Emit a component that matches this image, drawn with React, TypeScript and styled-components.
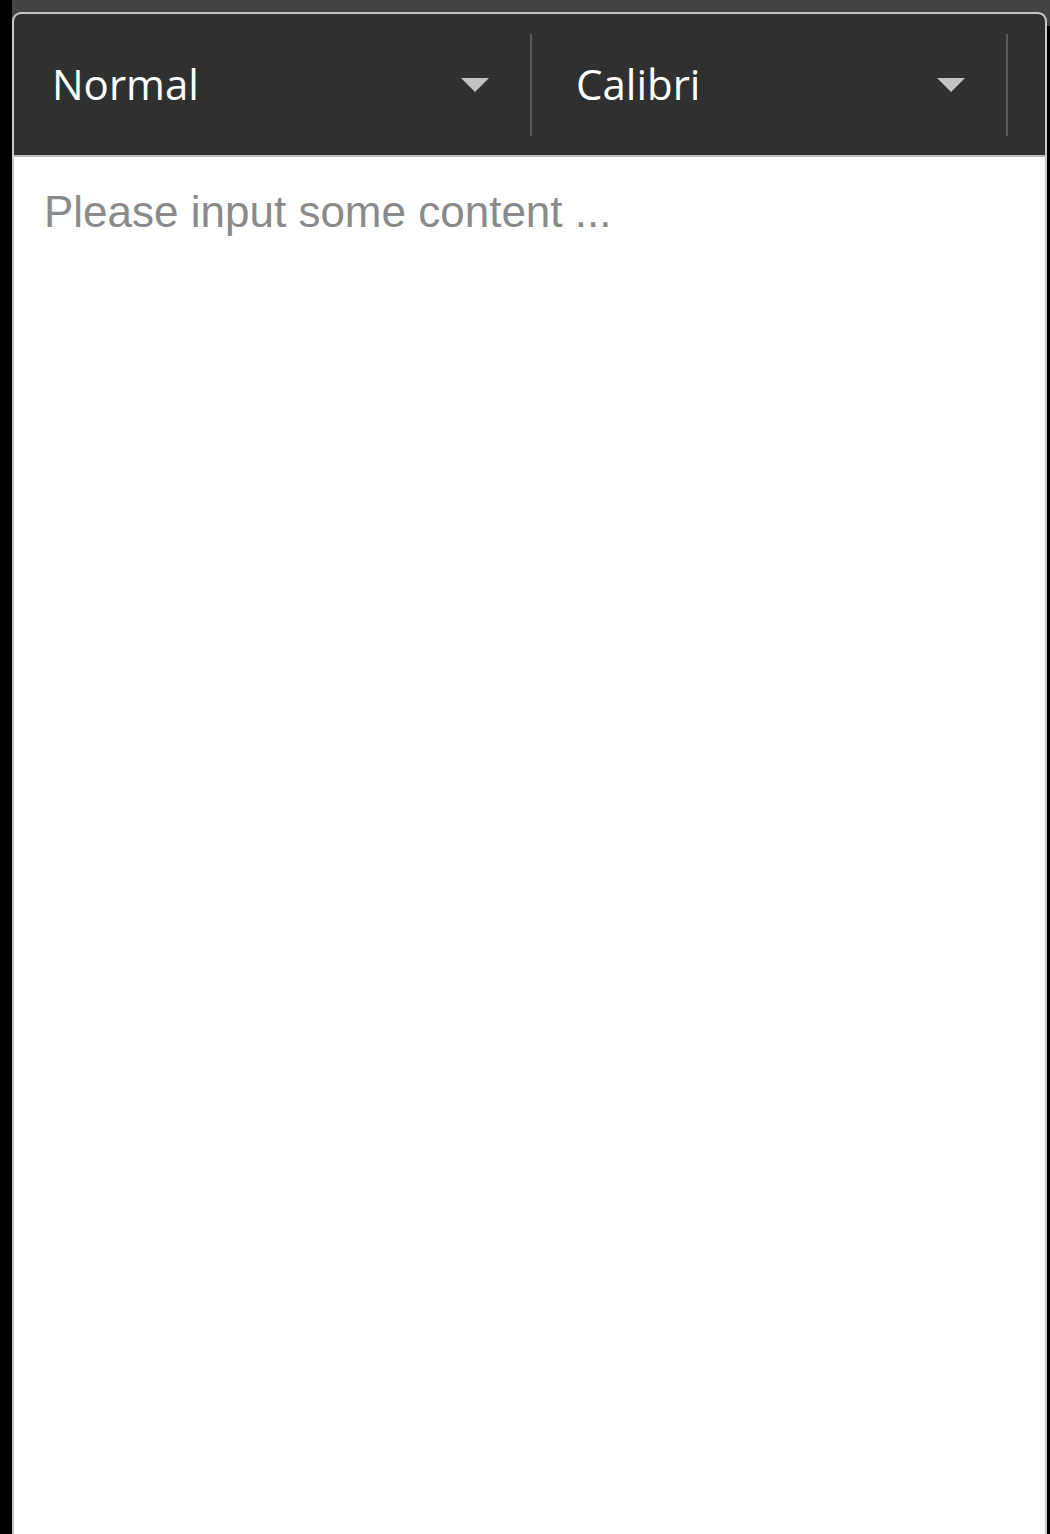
import React from "react";
import styled, { createGlobalStyle } from "styled-components";

const GlobalStyle = createGlobalStyle`
  html, body, #root {
    margin: 0;
    height: 100%;
  }
  body {
    background: #000;
    font-family: "Open Sans", "Noto Sans", sans-serif;
  }
`;

const Shell = styled.div`
  height: 100%;
  margin-left: 12px;
  padding-top: 12px;
  box-sizing: border-box;
  background: linear-gradient(#434343 0 26px, #000 26px);
  display: flex;
  flex-direction: column;
`;

const Card = styled.div`
  flex: 1;
  margin-right: 3px;
  border: 2px solid #c6c6c6;
  border-bottom: none;
  border-radius: 9px 9px 0 0;
  overflow: hidden;
  display: flex;
  flex-direction: column;
  background: #fff;
`;

const Toolbar = styled.div`
  height: 141px;
  flex-shrink: 0;
  background: #303030;
  border-bottom: 2px solid #bdbdbd;
  display: flex;
  align-items: center;
`;

const Select = styled.div<{ $width: number; $padLeft: number }>`
  width: ${(p) => p.$width}px;
  height: 102px;
  box-sizing: border-box;
  padding: 0 41px 0 ${(p) => p.$padLeft}px;
  border-right: 2px solid #5a5a5a;
  display: flex;
  align-items: center;
  justify-content: space-between;
`;

const SelectLabel = styled.span`
  color: #fff;
  font-size: 42px;
  line-height: 1;
  padding-bottom: 2px;
`;

const Caret = styled.span`
  width: 0;
  height: 0;
  border-left: 14px solid transparent;
  border-right: 14px solid transparent;
  border-top: 14px solid #c2c2c2;
`;

const Editor = styled.div`
  flex: 1;
  padding: 30px 30px;
  font-family: "Liberation Sans", Arial, sans-serif;
  font-size: 44px;
  color: #8a8a8a;
  background: #fff;
`;

export default function App() {
  return (
    <>
      <GlobalStyle />
      <Shell>
        <Card>
          <Toolbar>
            <Select $width={518} $padLeft={38}>
              <SelectLabel>Normal</SelectLabel>
              <Caret />
            </Select>
            <Select $width={476} $padLeft={44}>
              <SelectLabel>Calibri</SelectLabel>
              <Caret />
            </Select>
          </Toolbar>
          <Editor>Please input some content ...</Editor>
        </Card>
      </Shell>
    </>
  );
}
